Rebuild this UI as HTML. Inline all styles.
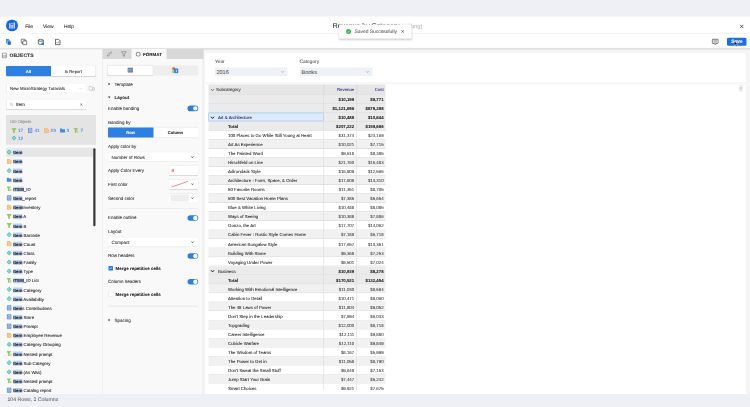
<!DOCTYPE html>
<html lang="en"><head><meta charset="utf-8"><title>Revenue by Category</title>
<style>
*{box-sizing:border-box;margin:0;padding:0}
html,body{width:750px;height:407px;overflow:hidden;background:#eef0f5}
#root{position:absolute;left:0;top:0;width:3000px;height:1628px;transform:scale(.25);transform-origin:0 0}
#zoom{position:absolute;left:0;top:0;width:3000px;height:1628px}
body{text-rendering:geometricPrecision;-webkit-text-stroke:0.24px;font-family:"Liberation Sans",sans-serif;color:#222;position:relative;font-size:20px;line-height:1}
.abs{position:absolute}
#topband{left:0;top:0;width:3000px;height:66px;background:#eef0f5}
#header{left:0;top:66px;width:3000px;height:68px;background:#fff}
#hline{left:0;top:134.8px;width:3000px;height:2.8px;background:#ececec}
#toolbar{left:0;top:136px;width:3000px;height:58.4px;background:#fff}
#tbshadow{left:0;top:191.2px;width:3000px;height:8px;background:linear-gradient(#f4f4f4,#dcdcdc 50%,#e6e6e6)}
#main{left:0;top:196px;width:3000px;height:1380px;background:#f5f5f6}
#status{left:0;top:1576px;width:3000px;height:56px;background:#eef0f5}
.t{position:absolute;white-space:nowrap}
.menu{font-size:19.6px;color:#1c1c1c;top:95.2px}
#logo{left:24.2px;top:77.6px;width:48px;height:48px}
#title{left:1331.2px;top:88px;font-size:27.6px;color:#222}
#toast{left:1355.6px;top:98.4px;width:290.4px;height:55.2px;background:#fff;border-radius:4.8px;box-shadow:0 2.4px 8.8px rgba(0,0,0,.2)}
#save{left:2908px;top:150.4px;width:78px;height:32.8px;background:#1b6eea;border-radius:6.4px;color:#fff;font-weight:bold;font-size:20px;text-align:center;line-height:32.8px}
/* objects panel */
#objpanel{left:0;top:197.6px;width:410.4px;height:1378.4px;background:#f9f9f9;border-right:2.8px solid #d8d8d8}
.ptitle{font-weight:bold;font-size:20px;color:#2b2b2b;letter-spacing:0.4px}
#seg{left:24px;top:264px;width:358.4px;height:40px;background:#fff;border-radius:4px;box-shadow:0 0.8px 3.2px rgba(0,0,0,.15)}
#segall{left:0;top:0;width:180px;height:40px;background:#2e7fe2;color:#fff;font-weight:bold;text-align:center;line-height:41.6px;font-size:16.8px;border-radius:4px 0 0 4px}
#segrep{left:180px;top:0;width:178.4px;height:40px;color:#222;text-align:center;line-height:41.6px;font-size:16.8px}
.inp{background:#fff;border-radius:4px;box-shadow:0 0.8px 3.2px rgba(0,0,0,.13)}
#objbox{left:24px;top:460px;width:360px;height:119.2px;background:#e4e4e4}
.cnt{font-size:18.4px;color:#3a7bd5}
.orow{position:absolute;left:23.6px;width:348.8px;height:36.6px;white-space:nowrap}
.orow.sel0{background:#e6e6e6}
.oi{position:absolute;left:2.4px;top:7.6px;width:21.2px;height:21.2px}
.ot{position:absolute;left:29.6px;top:0;line-height:41.2px;font-size:17.6px;color:#111}
.hl{background:#b9d1f1;font-weight:bold}
#oscroll{left:373.2px;top:592.8px;width:8.4px;height:312px;background:#3a3a3a;border-radius:4px}
/* format panel */
#fmtpanel{left:410.4px;top:196px;width:402.4px;height:1380px;background:#f9f9f9;border-right:2.8px solid #dcdcdc}
#fmttabs{left:410.4px;top:196px;width:403.2px;height:40px;background:#d8d8d8}
#fmttab{left:525.6px;top:196px;width:140px;height:40px;background:#f9f9f9}
.fl{font-size:18px;color:#2a2a2a}
.fb{font-size:17.8px;color:#1a1a1a;font-weight:bold}
.tog{position:absolute;left:750.4px;width:42.4px;height:22.4px;border-radius:12px;background:#2e7fe2}
.tog:after{content:"";position:absolute;right:2.4px;top:2.4px;width:17.6px;height:17.6px;border-radius:50%;background:#fff}
.caret{position:absolute;width:7.6px;height:7.6px;border-right:2.4px solid #555;border-bottom:2.4px solid #555;transform:translate(0,-4px) rotate(45deg)}
/* grid */
#prompt{left:820px;top:212.8px;width:2162.8px;height:114.8px;background:#fff}
#gridpanel{left:820px;top:336.8px;width:2162.8px;height:1239.2px;background:#fff}
.sel{background:#eef1f6;border-radius:3.2px}
.plabel{font-size:19.2px;color:#555}
.pval{font-size:22.4px;color:#555}
#ghead{left:833.6px;top:338.4px;width:708px;height:40.6px;background:#e6e6e6;border-bottom:2.4px solid #d6d6d6}
.grow{position:absolute;left:833.6px;width:708px;font-size:17.4px;color:#222;border-bottom:2.4px solid #d0d0d0}
.grow>div{position:absolute;top:0;height:100%;white-space:nowrap;line-height:38px}
.c0{left:0;width:460.8px}
.c1{left:460.8px;width:132px;text-align:right;padding-right:9.6px;border-left:2.4px solid #d4d4d4}
.c2{left:592.8px;width:115.2px;text-align:right;padding-right:7.2px;border-left:2.4px solid #d4d4d4}
.b0{background:#fff}
.b1{background:#f1f1f1}
.grp0,.grp,.tot{background:#ebebeb;font-weight:bold}
.grp .c0,.grp0 .c0{font-weight:normal}
.grow.sel{background:#ebebeb;font-weight:bold;border-radius:0}
.grow.sel .c0{background:#dcebfb;outline:2.4px solid #8dbaec;outline-offset:-2.4px;font-weight:normal;color:#16165a}
.kd .c0 span{position:absolute;left:78.4px}
.ktot .c0 span{position:absolute;left:78.4px}
.kgrp .c0 span,.ksel .c0 span{position:absolute;left:38.4px}
.chev{position:absolute;left:7.2px;top:9.6px;width:18.4px;height:18.4px}
.kd .c1,.kd .c2{color:#3c3c3c}

</style></head>
<body>
<div id="root"><div id="zoom">
<div id="topband" class="abs"></div>
<div id="header" class="abs"></div>
<div id="hline" class="abs"></div>
<div id="toolbar" class="abs"></div>
<div id="main" class="abs"></div>
<div id="tbshadow" class="abs"></div>
<div id="status" class="abs"></div>

<!-- header -->
<svg id="logo" class="abs" viewBox="0 0 24 24"><circle cx="12" cy="12" r="12" fill="#1a66e8"/><rect x="6.6" y="7.4" width="2.3" height="10.6" fill="#fff"/><rect x="10.9" y="10.8" width="2.3" height="7.2" fill="#fff"/><rect x="10.9" y="7.4" width="2.3" height="2" fill="#fff"/><rect x="15.2" y="5.8" width="2.3" height="12.2" fill="#fff"/></svg>
<div class="t menu" style="left:100.8px">File</div>
<div class="t menu" style="left:172px">View</div>
<div class="t menu" style="left:256px">Help</div>
<div id="title" class="t">Revenue by Category <span style="color:#b4b4b4;font-size:23.2px">(editing)</span></div>
<svg class="abs" style="left:2958.4px;top:96.8px;width:17.6px;height:17.6px" viewBox="0 0 8 8"><path d="M1 1 L7 7 M7 1 L1 7" stroke="#222" stroke-width="1.3" fill="none"/></svg>

<!-- toolbar icons -->
<svg class="abs" style="left:21.6px;top:153.6px;width:24px;height:28px" viewBox="0 0 12 14"><path d="M1 1 H6 L9 4 V10 H1 Z" fill="#4b8ff0"/><path d="M4 5 H10 L11 6 V13 H4 Z" fill="#1a66e8" stroke="#fff" stroke-width=".8"/></svg>
<svg class="abs" style="left:82.4px;top:153.6px;width:28px;height:28px" viewBox="0 0 14 14"><rect x="1.2" y="1.2" width="8" height="8" rx="1.4" fill="none" stroke="#3a3a3a" stroke-width="1.5"/><rect x="4.6" y="4.6" width="8" height="8" rx="1.4" fill="#fff" stroke="#3a3a3a" stroke-width="1.5"/></svg>
<svg class="abs" style="left:149.6px;top:153.6px;width:28px;height:28px" viewBox="0 0 14 14"><ellipse cx="6.5" cy="3.4" rx="5" ry="2" fill="none" stroke="#3a3a3a" stroke-width="1.5"/><path d="M1.5 3.4 V10.6 C1.5 12.2 11.5 12.2 11.5 10.6 V3.4" fill="none" stroke="#3a3a3a" stroke-width="1.5"/><rect x="8" y="8" width="5" height="5" fill="#2e7fe2"/></svg>
<svg class="abs" style="left:216px;top:153.6px;width:28px;height:28px" viewBox="0 0 14 14"><path d="M3 1.5 H9 L12 4.5 V12.5 H3 Z" fill="none" stroke="#3a3a3a" stroke-width="1.5"/><path d="M5 7.5 L7 9.5 L10 6" fill="none" stroke="#444" stroke-width="1.2"/></svg>
<svg class="abs" style="left:2845.6px;top:152.8px;width:29.6px;height:29.6px" viewBox="0 0 15 15"><rect x="1.5" y="2" width="12" height="8.4" rx="1.2" fill="none" stroke="#3a3a3a" stroke-width="1.5"/><path d="M5 10.4 L7.5 13.4 L10 10.4" fill="#fff" stroke="#444" stroke-width="1.2"/><path d="M4 5 H11 M4 7.4 H11" stroke="#444" stroke-width="1"/></svg>
<div id="save" class="abs">Save</div>
<svg class="abs" style="left:2935.2px;top:161.6px;width:20px;height:26.4px" viewBox="0 0 10 13"><path d="M1 1 L1 10 L3.4 7.8 L5.2 12 L7 11.2 L5.2 7.2 L8.4 7.2 Z" fill="#111" stroke="#fff" stroke-width=".8"/></svg>

<!-- toast -->
<div id="toast" class="abs">
 <svg class="abs" style="left:28px;top:17.2px;width:20px;height:20px" viewBox="0 0 10 10"><circle cx="5" cy="5" r="5" fill="#35b44a"/><path d="M2.6 5.2 L4.3 6.9 L7.4 3.4" fill="none" stroke="#fff" stroke-width="1.3"/></svg>
 <div class="t" style="left:62.4px;top:17.6px;font-size:19.6px;color:#5a5a5a">Saved Successfully</div>
 <svg class="abs" style="left:248px;top:20.8px;width:13.6px;height:13.6px" viewBox="0 0 8 8"><path d="M1 1 L7 7 M7 1 L1 7" stroke="#3a3a3a" stroke-width="1.5" fill="none"/></svg>
</div>

<!-- objects panel -->
<div id="objpanel" class="abs"></div>
<svg class="abs" style="left:7.2px;top:210.4px;width:20.8px;height:24px" viewBox="0 0 10 12"><rect x="1" y="1" width="8" height="10" rx="1.6" fill="none" stroke="#555" stroke-width="1.2"/><path d="M1 7 H9" stroke="#555" stroke-width="1.2"/></svg>
<div class="t ptitle" style="left:37.6px;top:211.2px">OBJECTS</div>
<div id="seg" class="abs"><div id="segall" class="abs">All</div><div id="segrep" class="abs">In Report</div></div>
<div class="abs inp" style="left:25.6px;top:336px;width:318.4px;height:35.2px"></div>
<div class="t" style="left:40px;top:344.8px;font-size:17.6px;color:#222">New MicroStrategy Tutorials</div>
<svg class="abs" style="left:316px;top:348.8px;width:13.6px;height:10.4px" viewBox="0 0 8 6"><path d="M1 1.4 L4 4.6 L7 1.4" fill="none" stroke="#bbb" stroke-width="1.1"/></svg>
<svg class="abs" style="left:354.4px;top:342.4px;width:25.6px;height:21.6px" viewBox="0 0 13 11"><path d="M1 1.4 H4.6 L5.6 2.8 H8.4 V9.6 H1 Z" fill="none" stroke="#aaa" stroke-width="1"/><path d="M8.4 4.4 H12 V9.6 H8.4" fill="none" stroke="#aaa" stroke-width="1"/></svg>
<div class="abs inp" style="left:25.6px;top:400px;width:318.4px;height:36px"></div>
<svg class="abs" style="left:37.6px;top:409.6px;width:16px;height:16px" viewBox="0 0 8 8"><circle cx="3.2" cy="3.2" r="2.4" fill="none" stroke="#aaa" stroke-width="1"/><path d="M5 5 L7.4 7.4" stroke="#aaa" stroke-width="1"/></svg>
<div class="t" style="left:64px;top:408.8px;font-size:18.4px;color:#222">Item</div>
<svg class="abs" style="left:319.2px;top:412px;width:12px;height:12px" viewBox="0 0 8 8"><path d="M1 1 L7 7 M7 1 L1 7" stroke="#444" stroke-width="1.4" fill="none"/></svg>
<div id="objbox" class="abs"></div>
<div class="t" style="left:39.2px;top:476.8px;font-size:16.2px;color:#8a8a8a">100 Objects</div>
<!-- counts -->
<svg class="abs" style="left:45.6px;top:512px;width:20px;height:20px" viewBox="0 0 10 10"><path d="M0.6 1 H9.4 L6 5 V9.2 H4 V5 Z" fill="#9ccf5a" stroke="#6fae2e" stroke-width="0.8"/></svg>
<div class="t cnt" style="left:72px;top:512.8px">17</div>
<svg class="abs" style="left:112px;top:511.2px;width:18.4px;height:21.6px" viewBox="0 0 9 11"><path d="M1 0.6 H8 V10.4 H1 Z" fill="#dbe7fa" stroke="#2f6cd2" stroke-width="1.4"/><path d="M2.6 3.4 H6.4 M2.6 5.6 H6.4 M2.6 7.8 H6.4" stroke="#3a78d8" stroke-width="1"/></svg>
<div class="t cnt" style="left:137.6px;top:512.8px">41</div>
<svg class="abs" style="left:176px;top:511.2px;width:20px;height:21.6px" viewBox="0 0 10 11"><path d="M1 0.8 H5.6 L9 4.2 V10.2 H1 Z" fill="#f9c98a" stroke="#f0a040" stroke-width="1"/></svg>
<div class="t cnt" style="left:202.4px;top:512.8px">23</div>
<svg class="abs" style="left:239.2px;top:512px;width:22.4px;height:20px" viewBox="0 0 11 10"><path d="M0.5 1 H4.2 L5.2 2.4 H10.5 V9 H0.5 Z" fill="#3f8be8"/></svg>
<div class="t cnt" style="left:266.4px;top:512.8px">3</div>
<svg class="abs" style="left:294.4px;top:512px;width:20px;height:20px" viewBox="0 0 10 10"><path d="M0.8 1 H8 L5.2 4.4 V9 H3.6 V4.4 Z" fill="#9ccf5a" stroke="#6fae2e" stroke-width="0.8"/><path d="M6.5 6 H9.5 M6.5 8 H9.5" stroke="#6fae2e" stroke-width="1"/></svg>
<div class="t cnt" style="left:322.4px;top:512.8px">7</div>
<svg class="abs" style="left:45.6px;top:542.4px;width:20px;height:20px" viewBox="0 0 10 10"><path d="M5 0.8 L9.2 5 L5 9.2 L0.8 5 Z" fill="#7fd9c8" stroke="#2bb39b" stroke-width="1.2"/></svg>
<div class="t cnt" style="left:72px;top:543.2px">12</div>
<div class="orow sel0" style="top:590.8px"><svg class="oi" viewBox="0 0 10 10"><path d="M5 0.8 L9.2 5 L5 9.2 L0.8 5 Z" fill="#7fd9c8" stroke="#2bb39b" stroke-width="1.2"/></svg><span class="ot"><b class="hl">Item</b></span></div>
<div class="orow" style="top:627.4px"><svg class="oi" viewBox="0 0 10 10"><path d="M1.5 0.8 H6 L8.8 3.6 V9.2 H1.5 Z" fill="#f9c98a" stroke="#f0a040" stroke-width="1"/></svg><span class="ot"><b class="hl">Item</b></span></div>
<div class="orow" style="top:664px"><svg class="oi" viewBox="0 0 10 10"><path d="M5 0.8 L9.2 5 L5 9.2 L0.8 5 Z" fill="#7fd9c8" stroke="#2bb39b" stroke-width="1.2"/></svg><span class="ot"><b class="hl">Item</b></span></div>
<div class="orow" style="top:700.6px"><svg class="oi" viewBox="0 0 10 10"><path d="M0.5 1.5 H4 L5 2.8 H9.5 V8.8 H0.5 Z" fill="#3f8be8"/></svg><span class="ot"><b class="hl">Item</b></span></div>
<div class="orow" style="top:737.2px"><svg class="oi" viewBox="0 0 10 10"><path d="M0.8 1 H8 L5.2 4.4 V9 H3.6 V4.4 Z" fill="#9ccf5a" stroke="#6fae2e" stroke-width="0.8"/><path d="M6.5 6 H9.5 M6.5 8 H9.5" stroke="#6fae2e" stroke-width="1"/></svg><span class="ot"><b class="hl">ITEM</b>_ID</span></div>
<div class="orow" style="top:773.8px"><svg class="oi" viewBox="0 0 10 10"><path d="M1.5 0.6 H8.5 V9.4 H1.5 Z" fill="#dbe7fa" stroke="#2f6cd2" stroke-width="1.4"/><path d="M3 3.2 H7 M3 5.2 H7 M3 7.2 H7" stroke="#2f6cd2" stroke-width="1.1"/></svg><span class="ot"><b class="hl">Item</b>_report</span></div>
<div class="orow" style="top:810.4px"><svg class="oi" viewBox="0 0 10 10"><path d="M1.5 0.8 H6 L8.8 3.6 V9.2 H1.5 Z" fill="#f9c98a" stroke="#f0a040" stroke-width="1"/></svg><span class="ot"><b class="hl">Item</b>Inventory</span></div>
<div class="orow" style="top:847px"><svg class="oi" viewBox="0 0 10 10"><path d="M0.6 1 H9.4 L6 5 V9.2 H4 V5 Z" fill="#9ccf5a" stroke="#6fae2e" stroke-width="0.8"/></svg><span class="ot"><b class="hl">Item</b> A</span></div>
<div class="orow" style="top:883.6px"><svg class="oi" viewBox="0 0 10 10"><path d="M0.6 1 H9.4 L6 5 V9.2 H4 V5 Z" fill="#9ccf5a" stroke="#6fae2e" stroke-width="0.8"/></svg><span class="ot"><b class="hl">Item</b> B</span></div>
<div class="orow" style="top:920.2px"><svg class="oi" viewBox="0 0 10 10"><path d="M5 0.8 L9.2 5 L5 9.2 L0.8 5 Z" fill="#7fd9c8" stroke="#2bb39b" stroke-width="1.2"/></svg><span class="ot"><b class="hl">Item</b> Barcode</span></div>
<div class="orow" style="top:956.8px"><svg class="oi" viewBox="0 0 10 10"><path d="M1.5 0.8 H6 L8.8 3.6 V9.2 H1.5 Z" fill="#f9c98a" stroke="#f0a040" stroke-width="1"/></svg><span class="ot"><b class="hl">Item</b> Count</span></div>
<div class="orow" style="top:993.4px"><svg class="oi" viewBox="0 0 10 10"><path d="M5 0.8 L9.2 5 L5 9.2 L0.8 5 Z" fill="#7fd9c8" stroke="#2bb39b" stroke-width="1.2"/></svg><span class="ot"><b class="hl">Item</b> Class</span></div>
<div class="orow" style="top:1030px"><svg class="oi" viewBox="0 0 10 10"><path d="M5 0.8 L9.2 5 L5 9.2 L0.8 5 Z" fill="#7fd9c8" stroke="#2bb39b" stroke-width="1.2"/></svg><span class="ot"><b class="hl">Item</b> Family</span></div>
<div class="orow" style="top:1066.6px"><svg class="oi" viewBox="0 0 10 10"><path d="M5 0.8 L9.2 5 L5 9.2 L0.8 5 Z" fill="#7fd9c8" stroke="#2bb39b" stroke-width="1.2"/></svg><span class="ot"><b class="hl">Item</b> Type</span></div>
<div class="orow" style="top:1103.2px"><svg class="oi" viewBox="0 0 10 10"><path d="M0.8 1 H8 L5.2 4.4 V9 H3.6 V4.4 Z" fill="#9ccf5a" stroke="#6fae2e" stroke-width="0.8"/><path d="M6.5 6 H9.5 M6.5 8 H9.5" stroke="#6fae2e" stroke-width="1"/></svg><span class="ot"><b class="hl">ITEM</b>_ID List</span></div>
<div class="orow" style="top:1139.8px"><svg class="oi" viewBox="0 0 10 10"><path d="M5 0.8 L9.2 5 L5 9.2 L0.8 5 Z" fill="#7fd9c8" stroke="#2bb39b" stroke-width="1.2"/></svg><span class="ot"><b class="hl">Item</b> Category</span></div>
<div class="orow" style="top:1176.4px"><svg class="oi" viewBox="0 0 10 10"><path d="M5 0.8 L9.2 5 L5 9.2 L0.8 5 Z" fill="#7fd9c8" stroke="#2bb39b" stroke-width="1.2"/></svg><span class="ot"><b class="hl">Item</b> Availability</span></div>
<div class="orow" style="top:1213px"><svg class="oi" viewBox="0 0 10 10"><path d="M1.5 0.6 H8.5 V9.4 H1.5 Z" fill="#dbe7fa" stroke="#2f6cd2" stroke-width="1.4"/><path d="M3 3.2 H7 M3 5.2 H7 M3 7.2 H7" stroke="#2f6cd2" stroke-width="1.1"/></svg><span class="ot"><b class="hl">Item</b>s Contributions</span></div>
<div class="orow" style="top:1249.6px"><svg class="oi" viewBox="0 0 10 10"><path d="M1.5 0.6 H8.5 V9.4 H1.5 Z" fill="#dbe7fa" stroke="#2f6cd2" stroke-width="1.4"/><path d="M3 3.2 H7 M3 5.2 H7 M3 7.2 H7" stroke="#2f6cd2" stroke-width="1.1"/></svg><span class="ot"><b class="hl">Item</b> Store</span></div>
<div class="orow" style="top:1286.2px"><svg class="oi" viewBox="0 0 10 10"><path d="M1.5 0.6 H8.5 V9.4 H1.5 Z" fill="#dbe7fa" stroke="#2f6cd2" stroke-width="1.4"/><path d="M3 3.2 H7 M3 5.2 H7 M3 7.2 H7" stroke="#2f6cd2" stroke-width="1.1"/></svg><span class="ot"><b class="hl">Item</b> Prompt</span></div>
<div class="orow" style="top:1322.8px"><svg class="oi" viewBox="0 0 10 10"><path d="M1.5 0.8 H6 L8.8 3.6 V9.2 H1.5 Z" fill="#f9c98a" stroke="#f0a040" stroke-width="1"/></svg><span class="ot"><b class="hl">Item</b> Employee Revenue</span></div>
<div class="orow" style="top:1359.4px"><svg class="oi" viewBox="0 0 10 10"><path d="M5 0.8 L9.2 5 L5 9.2 L0.8 5 Z" fill="#7fd9c8" stroke="#2bb39b" stroke-width="1.2"/></svg><span class="ot"><b class="hl">Item</b> Category Grouping</span></div>
<div class="orow" style="top:1396px"><svg class="oi" viewBox="0 0 10 10"><path d="M0.8 1 H8 L5.2 4.4 V9 H3.6 V4.4 Z" fill="#9ccf5a" stroke="#6fae2e" stroke-width="0.8"/><path d="M6.5 6 H9.5 M6.5 8 H9.5" stroke="#6fae2e" stroke-width="1"/></svg><span class="ot"><b class="hl">Item</b> Nested prompt</span></div>
<div class="orow" style="top:1432.6px"><svg class="oi" viewBox="0 0 10 10"><path d="M5 0.8 L9.2 5 L5 9.2 L0.8 5 Z" fill="#7fd9c8" stroke="#2bb39b" stroke-width="1.2"/></svg><span class="ot"><b class="hl">Item</b> Sub Category</span></div>
<div class="orow" style="top:1469.2px"><svg class="oi" viewBox="0 0 10 10"><path d="M5 0.8 L9.2 5 L5 9.2 L0.8 5 Z" fill="#7fd9c8" stroke="#2bb39b" stroke-width="1.2"/></svg><span class="ot"><b class="hl">Item</b> (As Was)</span></div>
<div class="orow" style="top:1505.8px"><svg class="oi" viewBox="0 0 10 10"><path d="M0.8 1 H8 L5.2 4.4 V9 H3.6 V4.4 Z" fill="#9ccf5a" stroke="#6fae2e" stroke-width="0.8"/><path d="M6.5 6 H9.5 M6.5 8 H9.5" stroke="#6fae2e" stroke-width="1"/></svg><span class="ot"><b class="hl">Item</b> Nested prompt</span></div>
<div class="orow" style="top:1542.4px"><svg class="oi" viewBox="0 0 10 10"><path d="M1.5 0.6 H8.5 V9.4 H1.5 Z" fill="#dbe7fa" stroke="#2f6cd2" stroke-width="1.4"/><path d="M3 3.2 H7 M3 5.2 H7 M3 7.2 H7" stroke="#2f6cd2" stroke-width="1.1"/></svg><span class="ot"><b class="hl">Item</b> Catalog report</span></div>
<div id="oscroll" class="abs"></div>
<div class="t" style="left:29.6px;top:1586.4px;font-size:20.8px;color:#666">104 Rows, 2 Columns</div>

<!-- format panel -->
<div id="fmtpanel" class="abs"></div>
<div id="fmttabs" class="abs"></div>
<div id="fmttab" class="abs"></div>
<svg class="abs" style="left:426.4px;top:203.2px;width:24.8px;height:24.8px" viewBox="0 0 10 10"><path d="M1.4 8.6 L2 6.4 L7 1.4 L8.6 3 L3.6 8 Z" fill="none" stroke="#8a8a8a" stroke-width="1.2"/></svg>
<svg class="abs" style="left:483.2px;top:204px;width:24.8px;height:24.8px" viewBox="0 0 10 10"><path d="M1 1.2 H9 L6 5 V8.8 L4 7.6 V5 Z" fill="none" stroke="#8a8a8a" stroke-width="1.2"/></svg>
<svg class="abs" style="left:542.4px;top:205.6px;width:21.6px;height:21.6px" viewBox="0 0 10 10"><circle cx="5" cy="5" r="3.8" fill="none" stroke="#555" stroke-width="1.3"/></svg>
<div class="t" style="left:572px;top:208px;font-size:18px;font-weight:bold;color:#222">FORMAT</div>
<!-- seg -->
<div class="abs" style="left:429.6px;top:261.6px;width:362.4px;height:40.4px;background:#eeeeee;border-radius:4px"></div>
<div class="abs inp" style="left:430.4px;top:262.4px;width:180.8px;height:38.8px"></div>
<svg class="abs" style="left:509.6px;top:270.4px;width:22.4px;height:20.8px" viewBox="0 0 11 10"><rect x="0.6" y="0.6" width="9.8" height="8.8" fill="#a9c4ec" stroke="#50607c" stroke-width="1"/><rect x="0.6" y="0.6" width="9.8" height="2.4" fill="#5f86c4"/><path d="M3.8 3 V9.4 M7.2 3 V9.4 M0.6 5.2 H10.4 M0.6 7.4 H10.4" stroke="#50607c" stroke-width=".9"/></svg>
<svg class="abs" style="left:685.6px;top:266.4px;width:29.6px;height:28.8px" viewBox="0 0 15 14"><circle cx="4.4" cy="4.2" r="3.4" fill="#f2703c"/><rect x="1.2" y="7.6" width="4" height="5.4" rx="1" fill="#8ccf7a"/><rect x="5.4" y="3.6" width="8.4" height="9.8" rx="1.6" fill="#2f7de1"/><rect x="8.9" y="6.4" width="1.5" height="5" fill="#fff"/></svg>
<!-- sections -->
<div class="abs" style="left:433.6px;top:331.2px;width:0;height:0;border-top:5.2px solid transparent;border-bottom:5.2px solid transparent;border-left:7.2px solid #333"></div>
<div class="t fl" style="left:458.4px;top:327.2px">Template</div>
<div class="abs" style="left:432px;top:386.4px;width:0;height:0;border-left:5.2px solid transparent;border-right:5.2px solid transparent;border-top:7.2px solid #333"></div>
<div class="t fb" style="left:458.4px;top:380px">Layout</div>
<div class="t fl" style="left:432px;top:424px">Enable banding</div>
<div class="tog" style="top:422.4px"></div>
<div class="t fl" style="left:432px;top:480px">Banding by</div>
<div class="abs inp" style="left:432px;top:510.4px;width:360px;height:40px"></div>
<div class="abs" style="left:432px;top:510.4px;width:181.6px;height:40px;background:#2e7fe2;color:#fff;font-weight:bold;font-size:16.4px;text-align:center;line-height:41.6px;border-radius:4px 0 0 4px">Row</div>
<div class="abs" style="left:612px;top:510.4px;width:180px;height:40px;color:#222;font-weight:bold;font-size:16.4px;text-align:center;line-height:41.6px">Column</div>
<div class="t fl" style="left:432px;top:577.6px">Apply color by</div>
<div class="abs inp" style="left:432px;top:608.8px;width:360px;height:37.6px"></div>
<div class="t fl" style="left:446.4px;top:619.2px">Number of Rows</div>
<div class="caret" style="left:766.4px;top:625.6px"></div>
<div class="t fl" style="left:432px;top:674.4px">Apply Color Every</div>
<div class="abs inp" style="left:676px;top:662.4px;width:116px;height:37.6px"></div>
<div class="t" style="left:685.6px;top:672.8px;font-size:18.4px;color:#e24a4a">8</div>
<div class="t fl" style="left:432px;top:729.6px">First color</div>
<div class="abs inp" style="left:676px;top:718.4px;width:116px;height:37.6px"></div>
<svg class="abs" style="left:681.6px;top:722.4px;width:74.4px;height:29.6px" viewBox="0 0 19 8"><path d="M0.5 7 L18.5 1" stroke="#d9534f" stroke-width=".7"/></svg>
<div class="caret" style="left:766.4px;top:734.4px"></div>
<div class="t fl" style="left:432px;top:785.6px">Second color</div>
<div class="abs inp" style="left:676px;top:773.6px;width:116px;height:37.6px"></div>
<div class="abs" style="left:682.4px;top:778.4px;width:72px;height:28px;background:#eee"></div>
<div class="caret" style="left:766.4px;top:790.4px"></div>
<div class="abs" style="left:432px;top:833.6px;width:360px;height:2.4px;background:#e2e2e2"></div>
<div class="t fl" style="left:432px;top:862.4px">Enable outline</div>
<div class="tog" style="top:860.8px"></div>
<div class="t fl" style="left:432px;top:917.6px">Layout</div>
<div class="abs inp" style="left:432px;top:948.8px;width:360px;height:37.6px"></div>
<div class="t fl" style="left:446.4px;top:959.2px">Compact</div>
<div class="caret" style="left:766.4px;top:965.6px"></div>
<div class="t fl" style="left:432px;top:1014.4px">Row headers</div>
<div class="tog" style="top:1012.8px"></div>
<div class="abs" style="left:434.4px;top:1064px;width:17.6px;height:17.6px;background:#2e7fe2;border-radius:2.4px"></div>
<svg class="abs" style="left:436.8px;top:1066.4px;width:12.8px;height:12.8px" viewBox="0 0 8 8"><path d="M1.4 4.2 L3.2 6 L6.6 2" fill="none" stroke="#fff" stroke-width="1.4"/></svg>
<div class="t fb" style="left:462.4px;top:1064px">Merge repetitive cells</div>
<div class="t fl" style="left:432px;top:1118.4px">Column headers</div>
<div class="tog" style="top:1116px"></div>
<div class="abs" style="left:434.4px;top:1168.8px;width:17.6px;height:17.6px;background:#fff;border-radius:2.4px;box-shadow:0 0 2.4px rgba(0,0,0,.3)"></div>
<div class="t fb" style="left:462.4px;top:1169.6px">Merge repetitive cells</div>
<div class="abs" style="left:432px;top:1223.2px;width:360px;height:2.4px;background:#e2e2e2"></div>
<div class="abs" style="left:433.6px;top:1275.2px;width:0;height:0;border-top:5.2px solid transparent;border-bottom:5.2px solid transparent;border-left:7.2px solid #333"></div>
<div class="t fl" style="left:458.4px;top:1271.2px">Spacing</div>

<!-- grid area -->
<div id="prompt" class="abs"></div>
<div id="gridpanel" class="abs"></div>
<div class="abs" style="left:820px;top:327.6px;width:2162.8px;height:9.2px;background:#f8f8f8"></div>
<div class="t plabel" style="left:860px;top:238.4px">Year</div>
<div class="abs sel" style="left:860px;top:268.8px;width:289.6px;height:36px"></div>
<div class="t pval" style="left:865.6px;top:276px">2016</div>
<svg class="abs" style="left:1124px;top:282.4px;width:13.6px;height:10.4px" viewBox="0 0 8 6"><path d="M1 1.4 L4 4.6 L7 1.4" fill="none" stroke="#888" stroke-width="1.2"/></svg>
<div class="t plabel" style="left:1198.4px;top:238.4px">Category</div>
<div class="abs sel" style="left:1200px;top:268.8px;width:289.6px;height:36px"></div>
<div class="t pval" style="left:1205.6px;top:276px">Books</div>
<svg class="abs" style="left:1464px;top:282.4px;width:13.6px;height:10.4px" viewBox="0 0 8 6"><path d="M1 1.4 L4 4.6 L7 1.4" fill="none" stroke="#888" stroke-width="1.2"/></svg>
<div id="ghead" class="abs">
 <svg class="abs" style="left:7.2px;top:11.2px;width:18.4px;height:18.4px" viewBox="0 0 8 8"><path d="M1.2 2.5 L4 5.5 L6.8 2.5" fill="none" stroke="#444" stroke-width="1.1"/></svg>
 <div class="t" style="left:30.4px;top:10.4px;font-size:17.6px;color:#333">Subcategory</div>
 <div class="abs" style="left:460.8px;top:0;width:2.4px;height:40.6px;background:#d4d4d4"></div>
 <div class="abs" style="left:592.8px;top:0;width:2.4px;height:40.6px;background:#d4d4d4"></div>
 <div class="t" style="right:124.8px;top:10.4px;font-size:17.2px;color:#1c1c7a">Revenue</div>
 <div class="t" style="right:7.2px;top:10.4px;font-size:17.2px;color:#1c1c7a">Cost</div>
</div>
<div class="grow grp0 kgrp0" style="top:379px;height:36.12px"><div class="c0"><span></span></div><div class="c1">$10,199</div><div class="c2">$9,771</div></div>
<div class="grow grp0 kgrp0" style="top:415.12px;height:36.12px"><div class="c0"><span></span></div><div class="c1">$1,121,696</div><div class="c2">$879,398</div></div>
<div class="grow sel ksel" style="top:451.2px;height:36.12px"><div class="c0"><svg class="chev" viewBox="0 0 8 8"><path d="M1.2 2.5 L4 5.5 L6.8 2.5" fill="none" stroke="#111" stroke-width="1.7"/></svg><span>Art & Architecture</span></div><div class="c1">$10,488</div><div class="c2">$10,644</div></div>
<div class="grow tot ktot" style="top:487.32px;height:36.12px"><div class="c0"><span>Total</span></div><div class="c1">$207,222</div><div class="c2">$159,666</div></div>
<div class="grow b0 kd" style="top:523.4px;height:36.12px"><div class="c0"><span>100 Places to Go While Still Young at Heart</span></div><div class="c1">$31,374</div><div class="c2">$23,169</div></div>
<div class="grow b1 kd" style="top:559.52px;height:36.12px"><div class="c0"><span>Art As Experience</span></div><div class="c1">$10,021</div><div class="c2">$7,715</div></div>
<div class="grow b0 kd" style="top:595.6px;height:36.12px"><div class="c0"><span>The Painted Word</span></div><div class="c1">$9,518</div><div class="c2">$8,385</div></div>
<div class="grow b1 kd" style="top:631.72px;height:36.12px"><div class="c0"><span>Hirschfeld on Line</span></div><div class="c1">$21,760</div><div class="c2">$16,483</div></div>
<div class="grow b0 kd" style="top:667.8px;height:36.12px"><div class="c0"><span>Adirondack Style</span></div><div class="c1">$16,909</div><div class="c2">$12,566</div></div>
<div class="grow b1 kd" style="top:703.92px;height:36.12px"><div class="c0"><span>Architecture : Form, Space, & Order</span></div><div class="c1">$17,608</div><div class="c2">$13,310</div></div>
<div class="grow b0 kd" style="top:740px;height:36.12px"><div class="c0"><span>50 Favorite Rooms</span></div><div class="c1">$11,351</div><div class="c2">$8,705</div></div>
<div class="grow b1 kd" style="top:776.12px;height:36.12px"><div class="c0"><span>500 Best Vacation Home Plans</span></div><div class="c1">$7,385</div><div class="c2">$5,654</div></div>
<div class="grow b0 kd" style="top:812.2px;height:36.12px"><div class="c0"><span>Blue & White Living</span></div><div class="c1">$10,488</div><div class="c2">$8,085</div></div>
<div class="grow b1 kd" style="top:848.28px;height:36.12px"><div class="c0"><span>Ways of Seeing</span></div><div class="c1">$10,388</div><div class="c2">$7,886</div></div>
<div class="grow b0 kd" style="top:884.4px;height:36.12px"><div class="c0"><span>Gonzo, the Art</span></div><div class="c1">$17,707</div><div class="c2">$14,062</div></div>
<div class="grow b1 kd" style="top:920.48px;height:36.12px"><div class="c0"><span>Cabin Fever : Rustic Style Comes Home</span></div><div class="c1">$7,188</div><div class="c2">$5,718</div></div>
<div class="grow b0 kd" style="top:956.6px;height:36.12px"><div class="c0"><span>American Bungalow Style</span></div><div class="c1">$17,657</div><div class="c2">$13,351</div></div>
<div class="grow b1 kd" style="top:992.72px;height:36.12px"><div class="c0"><span>Building With Stone</span></div><div class="c1">$9,368</div><div class="c2">$7,253</div></div>
<div class="grow b0 kd" style="top:1028.8px;height:36.12px"><div class="c0"><span>Voyaging Under Power</span></div><div class="c1">$8,501</div><div class="c2">$7,024</div></div>
<div class="grow grp kgrp" style="top:1064.92px;height:36.12px"><div class="c0"><svg class="chev" viewBox="0 0 8 8"><path d="M1.2 2.5 L4 5.5 L6.8 2.5" fill="none" stroke="#111" stroke-width="1.7"/></svg><span>Business</span></div><div class="c1">$10,939</div><div class="c2">$8,278</div></div>
<div class="grow tot ktot" style="top:1101px;height:36.12px"><div class="c0"><span>Total</span></div><div class="c1">$170,521</div><div class="c2">$132,454</div></div>
<div class="grow b1 kd" style="top:1137.08px;height:36.12px"><div class="c0"><span>Working With Emotional Intelligence</span></div><div class="c1">$11,030</div><div class="c2">$8,584</div></div>
<div class="grow b0 kd" style="top:1173.2px;height:36.12px"><div class="c0"><span>Attention to Detail</span></div><div class="c1">$10,471</div><div class="c2">$8,060</div></div>
<div class="grow b1 kd" style="top:1209.32px;height:36.12px"><div class="c0"><span>The 48 Laws of Power</span></div><div class="c1">$11,804</div><div class="c2">$9,052</div></div>
<div class="grow b0 kd" style="top:1245.4px;height:36.12px"><div class="c0"><span>Don't Step in the Leadership</span></div><div class="c1">$7,894</div><div class="c2">$6,033</div></div>
<div class="grow b1 kd" style="top:1281.52px;height:36.12px"><div class="c0"><span>Topgrading</span></div><div class="c1">$12,000</div><div class="c2">$8,718</div></div>
<div class="grow b0 kd" style="top:1317.6px;height:36.12px"><div class="c0"><span>Career Intelligence</span></div><div class="c1">$12,111</div><div class="c2">$9,880</div></div>
<div class="grow b1 kd" style="top:1353.72px;height:36.12px"><div class="c0"><span>Cubicle Warfare</span></div><div class="c1">$12,110</div><div class="c2">$9,849</div></div>
<div class="grow b0 kd" style="top:1389.8px;height:36.12px"><div class="c0"><span>The Wisdom of Teams</span></div><div class="c1">$8,167</div><div class="c2">$5,999</div></div>
<div class="grow b1 kd" style="top:1425.92px;height:36.12px"><div class="c0"><span>The Power to Get in</span></div><div class="c1">$11,058</div><div class="c2">$8,790</div></div>
<div class="grow b0 kd" style="top:1462px;height:36.12px"><div class="c0"><span>Don't Sweat the Small Stuff</span></div><div class="c1">$9,648</div><div class="c2">$7,153</div></div>
<div class="grow b1 kd" style="top:1498.12px;height:36.12px"><div class="c0"><span>Jump Start Your Brain</span></div><div class="c1">$7,447</div><div class="c2">$5,242</div></div>
<div class="grow b0 kd" style="top:1534.2px;height:36.12px"><div class="c0"><span>Smart Choices</span></div><div class="c1">$9,921</div><div class="c2">$7,675</div></div>
<div class="abs" style="left:820px;top:1560.8px;width:2162.8px;height:15.2px;background:#fff"></div>
<div class="abs" style="left:2956.4px;top:340px;width:14.4px;height:26.4px;background:#f4f4f4;border:2px solid #ddd;border-radius:2.4px"></div>
<div class="abs" style="left:2962.4px;top:348px;width:2.4px;height:10.4px;background:#999"></div>

</div></div>
</body></html>
